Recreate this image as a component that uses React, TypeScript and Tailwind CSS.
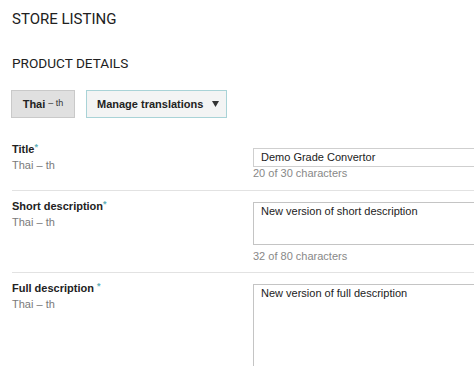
import React from "react";

function Label({ title, spaced }: { title: string; spaced?: boolean }) {
  return (
    <div className="text-[11px] leading-[16px]">
      <div className="font-bold text-[#222]">
        {title}
        {spaced ? " " : ""}
        <span className="text-[#5fb0b8] text-[9px] align-top leading-[12px]">*</span>
      </div>
      <div className="text-[#7a7a7a]">Thai – th</div>
    </div>
  );
}

export default function App() {
  return (
    <div className="w-[474px] h-[366px] overflow-hidden bg-white pl-[12px] pt-[9px] text-[#222] font-['Liberation_Sans',Arial,sans-serif]">
      <h1 className="text-[15px] leading-[20px] font-normal text-[#212121] font-['Roboto',sans-serif]">
        STORE LISTING
      </h1>
      <h2 className="mt-[24px] text-[13.6px] leading-[20px] font-normal text-[#212121] font-['Roboto',sans-serif]">
        PRODUCT DETAILS
      </h2>

      <div className="mt-[17px] flex items-start gap-[11px] -ml-px">
        <div className="w-[64px] h-[28px] flex items-center justify-center bg-[#e0e0e0] border border-[#c9c9c9] text-[#222]">
          <span className="font-bold text-[11px]">Thai</span>
          <span className="text-[9px] ml-[3px] text-[#333]">– th</span>
        </div>
        <div className="w-[141px] h-[28px] flex items-center pl-[10px] bg-[#f3f4f4] border border-[#a9d3d7] text-[#222]">
          <span className="font-bold text-[11px]">Manage translations</span>
          <svg className="ml-[9px]" width="7" height="6" viewBox="0 0 7 6">
            <path d="M0 0 H7 L3.5 6 Z" fill="#333" />
          </svg>
        </div>
      </div>

      {/* Title row */}
      <div className="mt-[23px] grid grid-cols-[241px_1fr]">
        <Label title="Title" />
        <div className="pt-[7px]">
          <div className="w-[260px] h-[19px] border border-[#cfcfcf] pl-[7px] text-[11px] leading-[17px] text-[#222]">
            Demo Grade Convertor
          </div>
          <div className="text-[11px] leading-[12px] text-[#888]">20 of 30 characters</div>
        </div>
      </div>
      <div className="mt-[11px] h-px bg-[#e2e2e2]" />

      {/* Short description row */}
      <div className="mt-[7px] grid grid-cols-[241px_1fr]">
        <Label title="Short description" />
        <div className="pt-[4px]">
          <div className="w-[260px] h-[43px] border border-[#c4c4c4] pl-[7px] pt-[1px] text-[11px] leading-[15px] text-[#222]">
            New version of short description
          </div>
          <div className="mt-[5px] text-[11px] leading-[12px] text-[#888]">32 of 80 characters</div>
        </div>
      </div>
      <div className="mt-[10px] h-px bg-[#e2e2e2]" />

      {/* Full description row */}
      <div className="mt-[7px] grid grid-cols-[241px_1fr]">
        <Label title="Full description" spaced />
        <div className="pt-[4px]">
          <div className="w-[260px] h-[120px] border border-[#c4c4c4] pl-[7px] pt-[1px] text-[11px] leading-[15px] text-[#222]">
            New version of full description
          </div>
        </div>
      </div>
    </div>
  );
}
